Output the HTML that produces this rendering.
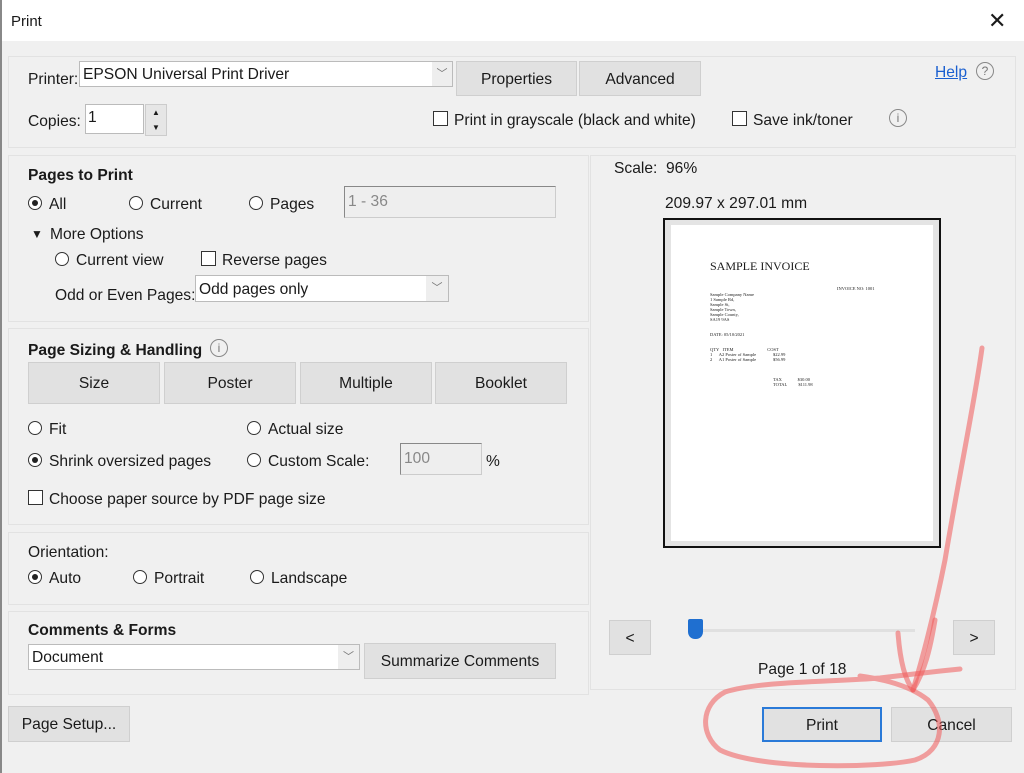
<!DOCTYPE html>
<html><head><style>
body{margin:0;width:1024px;height:773px;background:#f0f0f0;font-family:"Liberation Sans",sans-serif;font-size:15.6px;color:#1a1a1a;position:relative;overflow:hidden}
.a{position:absolute}
.panel{position:absolute;border:1px solid #e2e2e2;background:#f0f0f0}
.btn{position:absolute;background:#e1e1e1;border:1px solid #cfcfcf;text-align:center;box-sizing:border-box}
.radio{position:absolute;width:14px;height:14px;border:1px solid #333;border-radius:50%;background:#fff;box-sizing:border-box}
.radio.on::after{content:"";position:absolute;left:3px;top:3px;width:6px;height:6px;border-radius:50%;background:#222}
.chk{position:absolute;width:15px;height:15px;border:1px solid #333;background:#fff;box-sizing:border-box}
.inp{position:absolute;background:#fff;border:1px solid #bbb;box-sizing:border-box}
b{font-weight:bold}
</style></head><body>
<div class="a" style="left:0;top:0;width:1024px;height:41px;background:#fff"></div>
<div class="a" style="left:11px;top:13px;font-size:15px">Print</div>
<div class="a" style="left:988px;top:8px;font-size:22px">✕</div>
<div class="a" style="left:0;top:0;width:2px;height:773px;background:#888"></div>

<div class="panel" style="left:8px;top:56px;width:1006px;height:90px"></div>
<div class="a" style="left:28px;top:71px">Printer:</div>
<div class="inp" style="left:79px;top:61px;width:374px;height:26px"></div>
<div class="a" style="left:83px;top:66px">EPSON Universal Print Driver</div>
<div class="a" style="left:432px;top:62px;width:20px;height:24px;background:#eee;color:#777;font-size:11px;text-align:center;line-height:24px">﹀</div>
<div class="btn" style="left:456px;top:61px;width:121px;height:35px;line-height:35px">Properties</div>
<div class="btn" style="left:579px;top:61px;width:122px;height:35px;line-height:35px">Advanced</div>
<div class="a" style="left:935px;top:64px;color:#1a5fd0;text-decoration:underline">Help</div>
<div class="a" style="left:976px;top:62px;width:16px;height:16px;border:1.5px solid #888;border-radius:50%;font-size:12px;color:#777;text-align:center;line-height:16px">?</div>
<div class="a" style="left:28px;top:113px">Copies:</div>
<div class="inp" style="left:85px;top:104px;width:59px;height:30px"></div>
<div class="a" style="left:88px;top:109px">1</div>
<div class="a" style="left:145px;top:104px;width:20px;height:30px;background:#e6e6e6;border:1px solid #ccc;font-size:8px;text-align:center;line-height:15px">▲<br>▼</div>
<div class="chk" style="left:433px;top:111px"></div>
<div class="a" style="left:454px;top:112px">Print in grayscale (black and white)</div>
<div class="chk" style="left:732px;top:111px"></div>
<div class="a" style="left:753px;top:112px">Save ink/toner</div>
<div class="a" style="left:889px;top:109px;width:16px;height:16px;border:1.5px solid #888;border-radius:50%;font-size:12px;color:#777;text-align:center;line-height:16px">i</div>

<div class="panel" style="left:8px;top:155px;width:579px;height:165px"></div>
<div class="a" style="left:28px;top:167px"><b>Pages to Print</b></div>
<div class="radio on" style="left:28px;top:196px"></div><div class="a" style="left:49px;top:196px">All</div>
<div class="radio" style="left:129px;top:196px"></div><div class="a" style="left:150px;top:196px">Current</div>
<div class="radio" style="left:249px;top:196px"></div><div class="a" style="left:270px;top:196px">Pages</div>
<div class="a" style="left:344px;top:186px;width:212px;height:32px;border:1px solid #ccc;border-left-color:#888;border-top-color:#888;background:#eee;box-sizing:border-box;color:#888;padding:6px 3px">1 - 36</div>
<div class="a" style="left:31px;top:227px;font-size:12px">▼</div><div class="a" style="left:50px;top:226px">More Options</div>
<div class="radio" style="left:55px;top:252px"></div><div class="a" style="left:76px;top:252px">Current view</div>
<div class="chk" style="left:201px;top:251px"></div><div class="a" style="left:222px;top:252px">Reverse pages</div>
<div class="a" style="left:55px;top:287px">Odd or Even Pages:</div>
<div class="inp" style="left:195px;top:275px;width:254px;height:27px"></div>
<div class="a" style="left:199px;top:281px">Odd pages only</div>
<div class="a" style="left:426px;top:276px;width:22px;height:25px;background:#eee;color:#777;font-size:11px;text-align:center;line-height:25px">﹀</div>

<div class="panel" style="left:8px;top:328px;width:579px;height:195px"></div>
<div class="a" style="left:28px;top:342px"><b>Page Sizing &amp; Handling</b></div>
<div class="a" style="left:210px;top:339px;width:16px;height:16px;border:1.5px solid #888;border-radius:50%;font-size:12px;color:#777;text-align:center;line-height:16px">i</div>
<div class="btn" style="left:28px;top:362px;width:132px;height:42px;line-height:42px">Size</div>
<div class="btn" style="left:164px;top:362px;width:132px;height:42px;line-height:42px">Poster</div>
<div class="btn" style="left:300px;top:362px;width:132px;height:42px;line-height:42px">Multiple</div>
<div class="btn" style="left:435px;top:362px;width:132px;height:42px;line-height:42px">Booklet</div>
<div class="radio" style="left:28px;top:421px"></div><div class="a" style="left:49px;top:421px">Fit</div>
<div class="radio" style="left:247px;top:421px"></div><div class="a" style="left:268px;top:421px">Actual size</div>
<div class="radio on" style="left:28px;top:453px"></div><div class="a" style="left:49px;top:453px">Shrink oversized pages</div>
<div class="radio" style="left:247px;top:453px"></div><div class="a" style="left:268px;top:453px">Custom Scale:</div>
<div class="a" style="left:400px;top:443px;width:82px;height:32px;border:1px solid #ccc;border-left-color:#888;border-top-color:#888;background:#eee;box-sizing:border-box;color:#888;padding:6px 3px">100</div>
<div class="a" style="left:486px;top:453px">%</div>
<div class="chk" style="left:28px;top:490px"></div><div class="a" style="left:49px;top:491px">Choose paper source by PDF page size</div>

<div class="panel" style="left:8px;top:532px;width:579px;height:71px"></div>
<div class="a" style="left:28px;top:544px">Orientation:</div>
<div class="radio on" style="left:28px;top:570px"></div><div class="a" style="left:49px;top:570px">Auto</div>
<div class="radio" style="left:133px;top:570px"></div><div class="a" style="left:154px;top:570px">Portrait</div>
<div class="radio" style="left:250px;top:570px"></div><div class="a" style="left:271px;top:570px">Landscape</div>

<div class="panel" style="left:8px;top:611px;width:579px;height:82px"></div>
<div class="a" style="left:28px;top:622px"><b>Comments &amp; Forms</b></div>
<div class="inp" style="left:28px;top:644px;width:332px;height:26px"></div>
<div class="a" style="left:32px;top:649px">Document</div>
<div class="a" style="left:338px;top:645px;width:21px;height:24px;background:#eee;color:#777;font-size:11px;text-align:center;line-height:24px">﹀</div>
<div class="btn" style="left:364px;top:643px;width:192px;height:36px;line-height:36px">Summarize Comments</div>

<div class="panel" style="left:590px;top:155px;width:424px;height:533px"></div>
<div class="a" style="left:614px;top:160px">Scale:&nbsp; 96%</div>
<div class="a" style="left:665px;top:195px">209.97 x 297.01 mm</div>
<div class="a" style="left:663px;top:218px;width:274px;height:326px;border:2px solid #111;background:#e4e4e4"></div>
<div class="a" style="left:671px;top:225px;width:262px;height:316px;background:#fff"></div>
<div class="a" style="left:710px;top:259px;font-family:'Liberation Serif',serif;font-size:12px">SAMPLE INVOICE</div>
<div class="a" style="left:837px;top:286px;font-family:'Liberation Serif',serif;font-size:4.5px">INVOICE NO: 1001</div>
<div class="a" style="left:710px;top:292px;font-family:'Liberation Serif',serif;font-size:4.5px;line-height:5px">Sample Company Name<br>1 Sample Rd,<br>Sample St,<br>Sample Town,<br>Sample County,<br>SA19 9AS<br><br><br>DATE: 05/10/2021<br><br><br>QTY &nbsp; ITEM &nbsp;&nbsp;&nbsp;&nbsp;&nbsp;&nbsp;&nbsp;&nbsp;&nbsp;&nbsp;&nbsp;&nbsp;&nbsp;&nbsp;&nbsp;&nbsp;&nbsp;&nbsp;&nbsp;&nbsp;&nbsp;&nbsp;&nbsp;&nbsp;&nbsp;&nbsp;&nbsp;&nbsp; COST<br>1 &nbsp;&nbsp;&nbsp;&nbsp; A2 Poster of Sample &nbsp;&nbsp;&nbsp;&nbsp;&nbsp;&nbsp;&nbsp;&nbsp;&nbsp;&nbsp;&nbsp;&nbsp;&nbsp; $22.99<br>2 &nbsp;&nbsp;&nbsp;&nbsp; A1 Poster of Sample &nbsp;&nbsp;&nbsp;&nbsp;&nbsp;&nbsp;&nbsp;&nbsp;&nbsp;&nbsp;&nbsp;&nbsp;&nbsp; $56.99</div>
<div class="a" style="left:773px;top:377px;font-family:'Liberation Serif',serif;font-size:4.5px;line-height:5px">TAX &nbsp;&nbsp;&nbsp;&nbsp;&nbsp;&nbsp;&nbsp;&nbsp;&nbsp;&nbsp;&nbsp;&nbsp; $30.00<br>TOTAL &nbsp;&nbsp;&nbsp;&nbsp;&nbsp;&nbsp;&nbsp;&nbsp; $111.98</div>
<div class="btn" style="left:609px;top:620px;width:42px;height:35px;line-height:35px">&lt;</div>
<div class="btn" style="left:953px;top:620px;width:42px;height:35px;line-height:35px">&gt;</div>
<div class="a" style="left:690px;top:629px;width:225px;height:3px;background:#e0e0e0"></div>
<div class="a" style="left:688px;top:619px;width:15px;height:20px;background:#1f6fd0;border-radius:2px 2px 7px 7px"></div>
<div class="a" style="left:758px;top:661px">Page 1 of 18</div>

<div class="btn" style="left:8px;top:706px;width:122px;height:36px;line-height:36px">Page Setup...</div>
<div class="btn" style="left:762px;top:707px;width:120px;height:35px;line-height:33px;border:2px solid #2a7ad8">Print</div>
<div class="btn" style="left:891px;top:707px;width:121px;height:35px;line-height:35px">Cancel</div>

<svg class="a" style="left:0;top:0" width="1024" height="773">
<g fill="none" stroke="rgba(240,90,90,0.55)" stroke-width="5" stroke-linecap="round" stroke-linejoin="round">
<path d="M982 348 C975 400 960 470 945 560 C935 610 925 650 913 690"/>
<path d="M898 633 C900 660 905 680 913 690 C925 670 930 650 935 620"/>
<path d="M960 669 C930 672 905 675 880 678 C830 682 760 681 725 692 C700 705 700 735 720 750 C760 770 880 768 915 760 C945 750 945 720 928 700 C913 688 890 680 860 676"/>
</g>
</svg>
</body></html>
